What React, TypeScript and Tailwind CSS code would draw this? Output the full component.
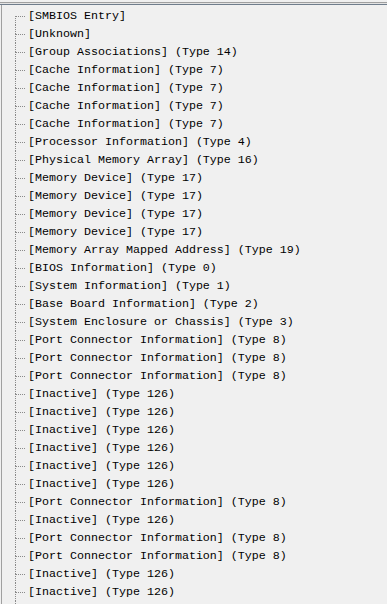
import React from "react";

const items: string[] = [
  "[SMBIOS Entry]",
  "[Unknown]",
  "[Group Associations] (Type 14)",
  "[Cache Information] (Type 7)",
  "[Cache Information] (Type 7)",
  "[Cache Information] (Type 7)",
  "[Cache Information] (Type 7)",
  "[Processor Information] (Type 4)",
  "[Physical Memory Array] (Type 16)",
  "[Memory Device] (Type 17)",
  "[Memory Device] (Type 17)",
  "[Memory Device] (Type 17)",
  "[Memory Device] (Type 17)",
  "[Memory Array Mapped Address] (Type 19)",
  "[BIOS Information] (Type 0)",
  "[System Information] (Type 1)",
  "[Base Board Information] (Type 2)",
  "[System Enclosure or Chassis] (Type 3)",
  "[Port Connector Information] (Type 8)",
  "[Port Connector Information] (Type 8)",
  "[Port Connector Information] (Type 8)",
  "[Inactive] (Type 126)",
  "[Inactive] (Type 126)",
  "[Inactive] (Type 126)",
  "[Inactive] (Type 126)",
  "[Inactive] (Type 126)",
  "[Inactive] (Type 126)",
  "[Port Connector Information] (Type 8)",
  "[Inactive] (Type 126)",
  "[Port Connector Information] (Type 8)",
  "[Port Connector Information] (Type 8)",
  "[Inactive] (Type 126)",
  "[Inactive] (Type 126)",
];

export default function App() {
  return (
    <div className="w-[387px] h-[604px] overflow-hidden bg-[#f0f0f0] flex flex-col">
      <div className="h-[2px] bg-[#f0f0f0]" />
      <div className="h-[1px] bg-[#a0a0a0]" />
      <div className="h-[1px] bg-[#e3e3e3]" />
      <div className="h-[1px] bg-[#6f7d8c]" />
      <div className="flex-1 flex overflow-hidden">
        <div className="w-[1px] bg-[#f0f0f0]" />
        <div className="w-[1px] bg-[#a0a0a0]" />
        <div
          className="flex-1 flex flex-col pt-[2px] pl-[13px] overflow-hidden"
          style={{ fontFamily: '"Liberation Mono", "Courier New", monospace' }}
        >
          {items.map((t, i) => (
            <div key={i} className="flex h-[18px] shrink-0 items-stretch">
              <div className="w-[10px] flex flex-col shrink-0">
                <div
                  className={
                    "h-[9px] " +
                    (i === 0 ? "" : "border-l border-dotted border-[#8a8a8a]")
                  }
                />
                <div className="h-[9px] border-l border-t border-dotted border-[#8a8a8a]" />
              </div>
              <span className="pl-[3px] text-[11.67px] leading-[18px] text-black whitespace-pre">
                {t}
              </span>
            </div>
          ))}
          <div className="flex-1 w-[10px] border-l border-dotted border-[#8a8a8a]" />
        </div>
      </div>
    </div>
  );
}
